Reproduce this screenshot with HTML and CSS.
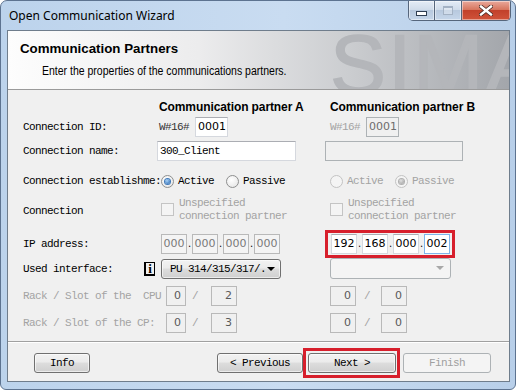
FILE: index.html
```html
<!DOCTYPE html>
<html>
<head>
  <link rel="stylesheet" href="styles.css">
</head>
<body>
  <div class="window">
    <div class="titlebar">
      <span class="title">Open Communication Wizard</span>
      <div class="caption">
        <div class="cap cap-min"><span class="min-glyph"></span></div>
        <div class="cap cap-max"><span class="max-glyph"></span></div>
        <div class="cap cap-close">
          <svg width="14" height="11" viewBox="0 0 14 11">
            <path d="M2 1.5 L12 9.5 M12 1.5 L2 9.5" stroke="#4a2a24" stroke-width="4" stroke-linecap="square"/>
            <path d="M2 1.5 L12 9.5 M12 1.5 L2 9.5" stroke="#fff" stroke-width="2.4" stroke-linecap="square"/>
          </svg>
        </div>
      </div>
    </div>

    <div class="client">
      <div class="banner">
        <div class="banner-title">Communication Partners</div>
        <div class="banner-sub"><span>Enter the properties of the communications partners.</span></div>
        <div class="watermark">SIMA</div>
      </div>

      <div class="form">
        <div class="row r-head">
          <div></div>
          <div class="cell-a colhead">Communication partner A</div>
          <div class="cell-b colhead">Communication partner B</div>
        </div>

        <div class="row r-id">
          <div class="lbl">Connection ID:</div>
          <div class="cell-a">
            <span class="prefix">W#16#</span>
            <span class="field num w-id">0001</span>
          </div>
          <div class="cell-b">
            <span class="prefix off">W#16#</span>
            <span class="field num w-id disabled">0001</span>
          </div>
        </div>

        <div class="row r-name">
          <div class="lbl">Connection name:</div>
          <div class="cell-a flush">
            <span class="field w-name">300_Client</span>
          </div>
          <div class="cell-b flush">
            <span class="field w-name disabled"></span>
          </div>
        </div>

        <div class="row r-est">
          <div class="lbl">Connection establishme:</div>
          <div class="cell-a">
            <label class="opt"><span class="radio checked"></span>Active</label>
            <label class="opt"><span class="radio"></span>Passive</label>
          </div>
          <div class="cell-b">
            <label class="opt off"><span class="radio disabled"></span>Active</label>
            <label class="opt off"><span class="radio disabled checked"></span>Passive</label>
          </div>
        </div>

        <div class="row r-conn">
          <div class="lbl">Connection</div>
          <div class="cell-a">
            <span class="check"></span>
            <span class="check-text">Unspecified<br>connection partner</span>
          </div>
          <div class="cell-b">
            <span class="check"></span>
            <span class="check-text">Unspecified<br>connection partner</span>
          </div>
        </div>

        <div class="row r-ip">
          <div class="lbl">IP address:</div>
          <div class="cell-a">
            <div class="ip">
              <span class="octet off">000</span><span class="dot">.</span>
              <span class="octet off">000</span><span class="dot">.</span>
              <span class="octet off">000</span><span class="dot">.</span>
              <span class="octet off">000</span>
            </div>
          </div>
          <div class="cell-b flush">
            <div class="ip marked">
              <span class="octet">192</span><span class="dot">.</span>
              <span class="octet">168</span><span class="dot">.</span>
              <span class="octet">000</span><span class="dot">.</span>
              <span class="octet focus">002</span>
            </div>
          </div>
        </div>

        <div class="row r-if">
          <div class="lbl lbl-icon">Used interface:<span class="info-icon">i</span></div>
          <div class="cell-a">
            <div class="combo">PU 314/315/317/.<span class="arrow"></span></div>
          </div>
          <div class="cell-b">
            <div class="combo disabled"><span class="arrow"></span></div>
          </div>
        </div>

        <div class="row r-rack">
          <div class="lbl off"><span class="clip">Rack / Slot of the&nbsp; CPU</span></div>
          <div class="cell-a rack-a">
            <span class="slot s1">0</span><span class="slash">/</span><span class="slot">2</span>
          </div>
          <div class="cell-b rack-b">
            <span class="slot">0</span><span class="slash">/</span><span class="slot">0</span>
          </div>
        </div>

        <div class="row r-rack">
          <div class="lbl off">Rack / Slot of the CP:</div>
          <div class="cell-a rack-a">
            <span class="slot s1">0</span><span class="slash">/</span><span class="slot">3</span>
          </div>
          <div class="cell-b rack-b">
            <span class="slot">0</span><span class="slash">/</span><span class="slot">0</span>
          </div>
        </div>
      </div>

      <div class="footer">
        <button class="btn btn-info">Info</button>
        <button class="btn btn-prev">&lt; Previous</button>
        <span class="marked-btn"><button class="btn btn-next">Next &gt;</button></span>
        <button class="btn btn-finish" disabled>Finish</button>
      </div>
    </div>
  </div>
</body>
</html>
```

FILE: styles.css
```css
body {
  margin: 0;
  font-family: "Liberation Mono", monospace;
  background: #fff;
}

.window {
  width: 516px;
  height: 390px;
  box-sizing: border-box;
  border: 1px solid #5d7390;
  border-radius: 7px 7px 6px 6px;
  background: linear-gradient(to right, #bcd3ec, #c9dcf1 55%, #b8cfe9);
  display: flex;
  flex-direction: column;
  overflow: hidden;
}

/* Title bar */
.titlebar {
  height: 29px;
  display: flex;
  align-items: flex-start;
}

.title {
  font-family: "Noto Sans", sans-serif;
  font-size: 12px;
  line-height: 29px;
  padding-left: 8px;
  color: #000;
}

.caption {
  margin-left: auto;
  margin-right: 4px;
  display: flex;
  height: 19px;
  border: 1px solid #56667c;
  border-top: none;
  border-radius: 0 0 5px 5px;
  overflow: hidden;
}

.cap {
  display: flex;
  align-items: center;
  justify-content: center;
  background: linear-gradient(#e4ecf6, #d0dcea 45%, #b8c9de 50%, #c6d6ea);
  box-shadow: inset 0 0 0 1px rgba(255,255,255,0.45);
}

.cap-min {
  width: 25px;
  border-right: 1px solid #56667c;
}

.cap-max {
  width: 26px;
  border-right: 1px solid #56667c;
}

.cap-close {
  width: 48px;
  background: linear-gradient(#e9a99c, #d7765f 45%, #c2412b 50%, #d0533a);
}

.min-glyph {
  width: 9px;
  height: 3px;
  margin-top: 5px;
  border: 1px solid #2f3e52;
  background: #fff;
}

.max-glyph {
  width: 8px;
  height: 6px;
  border: 1px solid #a4b2c4;
  border-top-width: 2px;
  background: rgba(255,255,255,0.3);
}

/* Client area */
.client {
  margin: 0 5px 0 6px;
  height: 352px;
  box-sizing: border-box;
  border: 1px solid #6f7d8c;
  background: #f0f0f0;
  display: flex;
  flex-direction: column;
}

.banner {
  height: 59px;
  box-sizing: border-box;
  border-bottom: 1px solid #9a9a9a;
  position: relative;
  overflow: hidden;
  background: linear-gradient(to right, #fdfdfd 0%, #ececed 38%, #cbcdd0 68%, #a3a6ab 100%);
}

.banner-title {
  position: relative;
  z-index: 1;
  font-family: "Liberation Sans", Arial, sans-serif;
  font-weight: bold;
  font-size: 13.3px;
  line-height: 16px;
  padding: 10px 0 0 12px;
  color: #000;
}

.banner-sub {
  position: relative;
  z-index: 1;
  font-family: "Liberation Sans", Arial, sans-serif;
  font-size: 12px;
  line-height: 16px;
  padding: 6px 0 0 34px;
  color: #000;
}

.banner-sub span {
  display: inline-block;
  transform: scaleX(0.875);
  transform-origin: left center;
}

.watermark {
  position: absolute;
  left: 322px;
  top: -9px;
  height: 67px;
  overflow: hidden;
  font-family: "Liberation Sans", Arial, sans-serif;
  font-size: 84px;
  line-height: 1;
  color: #b4b6ba;
  letter-spacing: 2px;
  -webkit-text-stroke: 1.5px #b4b6ba;
}

/* Form */
.form {
  height: 251px;
  box-sizing: border-box;
  padding: 9px 0 0 15px;
}

.row {
  display: grid;
  grid-template-columns: 134px 168px 1fr;
  align-items: center;
  height: 22px;
}

.r-head { height: 16px; }
.r-id { margin-top: 1px; }
.r-name { margin-top: 2px; }
.r-est { margin-top: 9px; height: 20px; }
.r-conn { margin-top: 8px; }
.r-ip { margin-top: 9px; }
.r-if { margin-top: 6px; height: 21px; }
.r-rack { margin-top: 6px; height: 21px; }

.lbl {
  font-size: 11px;
  letter-spacing: -0.6px;
  white-space: nowrap;
  color: #000;
}

.lbl.off { color: #a3a3a3; }

.clip {
  display: block;
  width: 140px;
  overflow: hidden;
}

.lbl-icon {
  display: flex;
  align-items: center;
}

.info-icon {
  margin-left: auto;
  margin-right: 2px;
  width: 11px;
  height: 14px;
  box-sizing: border-box;
  border: 1px solid #000;
  border-left-width: 2px;
  border-bottom-width: 2px;
  font-family: "Liberation Serif", serif;
  font-weight: bold;
  font-size: 13px;
  line-height: 11px;
  text-align: center;
  letter-spacing: 0;
}

.cell-a, .cell-b {
  display: flex;
  align-items: center;
  font-size: 11px;
  letter-spacing: -0.6px;
  white-space: nowrap;
}

.cell-a { padding-left: 4px; }
.cell-b { padding-left: 5px; }
.cell-a.flush, .cell-b.flush { padding-left: 0; }

.colhead {
  font-family: "Liberation Sans", Arial, sans-serif;
  font-weight: bold;
  font-size: 12px;
  letter-spacing: -0.1px;
}

.cell-a.colhead { padding-left: 2px; }

.prefix {
  width: 36px;
  color: #333;
}

.cell-a .prefix { width: 36px; margin-left: -2px; }
.prefix.off { color: #a3a3a3; }

.field {
  height: 20px;
  box-sizing: border-box;
  border: 1px solid #d5d8de;
  border-top-color: #abadb3;
  background: #fff;
  padding-left: 2px;
  line-height: 18px;
  color: #000;
}

.field.disabled {
  background: #f0f0f0;
  border-color: #adb2b5;
  color: #6d6d6d;
}

.num {
  font-family: "DejaVu Sans", sans-serif;
  font-size: 11px;
  letter-spacing: 0;
}

.w-id { width: 33px; }
.w-name { width: 139px; }
.cell-b .w-name { width: 138px; }

/* Radios and checkboxes */
.opt {
  display: flex;
  align-items: center;
  color: #000;
}

.opt + .opt { margin-left: 12px; }
.opt.off { color: #a3a3a3; }

.radio {
  width: 13px;
  height: 13px;
  box-sizing: border-box;
  border-radius: 50%;
  border: 1px solid #8e8f8f;
  background: radial-gradient(circle at 40% 35%, #fff, #e2e2e2);
  margin-right: 4px;
  display: flex;
  align-items: center;
  justify-content: center;
}

.radio.checked::after {
  content: '';
  width: 5px;
  height: 5px;
  border-radius: 50%;
  background: radial-gradient(circle at 40% 35%, #a8d2f7, #1d5fae);
  box-shadow: 0 0 0 1px #3f79b9;
}

.radio.disabled {
  border-color: #c3c3c3;
  background: #f4f4f4;
}

.radio.disabled.checked::after {
  background: radial-gradient(circle at 40% 35%, #e0e0e0, #9a9a9a);
  box-shadow: 0 0 0 1px #b0b0b0;
}

.check {
  width: 13px;
  height: 13px;
  box-sizing: border-box;
  border: 1px solid #c4c4c4;
  background: #f4f4f4;
  margin-right: 5px;
  align-self: flex-start;
  margin-top: 4px;
}

.check-text {
  line-height: 13px;
  color: #a3a3a3;
  margin-top: -2px;
}

/* IP address */
.ip {
  display: flex;
  align-items: center;
}

.ip.marked {
  border: 3px solid #d71f2c;
  padding: 1px 2px 1px 3px;
}

.octet {
  width: 26px;
  height: 20px;
  box-sizing: border-box;
  border: 1px solid #d5d8de;
  border-top-color: #abadb3;
  background: #fff;
  font-family: "DejaVu Sans", sans-serif;
  font-size: 11px;
  letter-spacing: 0;
  line-height: 18px;
  text-align: center;
  color: #000;
}

.octet.off {
  background: #f4f4f4;
  border-color: #b9b9b9;
  color: #7a7a7a;
}

.octet.focus { border-color: #7eb4ea; }

.dot {
  width: 5px;
  text-align: center;
  font-family: "DejaVu Sans", sans-serif;
  letter-spacing: 0;
  font-size: 10px;
  line-height: 20px;
  color: #000;
}

/* Combo box */
.combo {
  position: relative;
  width: 120px;
  height: 20px;
  box-sizing: border-box;
  border: 1px solid #707070;
  border-radius: 3px;
  background: linear-gradient(#f2f2f2, #ebebeb 45%, #dddddd 50%, #cfcfcf);
  box-shadow: inset 0 0 0 1px rgba(255,255,255,0.6);
  padding-left: 8px;
  line-height: 18px;
  color: #000;
}

.combo .arrow {
  position: absolute;
  right: 5px;
  top: 7px;
  border-left: 4px solid transparent;
  border-right: 4px solid transparent;
  border-top: 4px solid #000;
}

.combo.disabled {
  width: 121px;
  height: 21px;
  border-color: #adb2b5;
  background: #f4f4f4;
  box-shadow: none;
}

.combo.disabled .arrow { border-top-color: #a8a8a8; right: 6px; }

/* Rack / slot */
.rack-a { padding-left: 9px; }

.slot {
  width: 26px;
  height: 20px;
  box-sizing: border-box;
  border: 1px solid #b9b9b9;
  background: #f0f0f0;
  font-family: "DejaVu Sans", sans-serif;
  font-size: 11px;
  letter-spacing: 0;
  line-height: 18px;
  text-align: right;
  padding-right: 4px;
  color: #5a5a5a;
}

.slot.s1 { width: 20px; }

.slash {
  width: 25px;
  box-sizing: border-box;
  padding-left: 6px;
  color: #a3a3a3;
}

.rack-b .slash { padding-left: 8px; }

/* Footer */
.footer {
  height: 40px;
  box-sizing: border-box;
  border-top: 1px solid #a0a0a0;
  box-shadow: inset 0 1px #fff;
  padding: 5px 0 3px 26px;
  display: flex;
  align-items: center;
}

.btn {
  height: 20px;
  box-sizing: border-box;
  border: 1px solid #707070;
  border-radius: 3px;
  background: linear-gradient(#f2f2f2, #ebebeb 45%, #dddddd 50%, #cfcfcf);
  box-shadow: inset 0 0 0 1px rgba(255,255,255,0.6);
  font-family: "Liberation Mono", monospace;
  font-size: 11px;
  letter-spacing: -0.6px;
  color: #000;
  padding: 0;
}

.btn-info { width: 56px; }
.btn-prev { width: 86px; margin-left: 127px; }
.btn-next { width: 88px; display: block; }

.marked-btn {
  border: 3px solid #d71f2c;
  padding: 2px 1px 2px 2px;
}

.btn-finish {
  width: 88px;
  margin-left: 3px;
  border-color: #adb2b5;
  background: #f4f4f4;
  box-shadow: none;
  color: #a0a0a0;
}
```
